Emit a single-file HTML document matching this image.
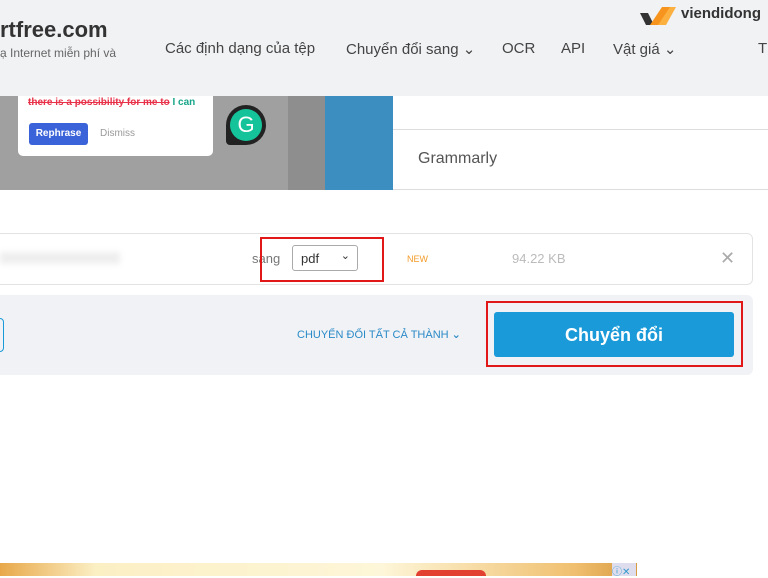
<!DOCTYPE html>
<html><head><meta charset="utf-8"><style>
*{margin:0;padding:0;box-sizing:border-box}
body{width:768px;height:576px;overflow:hidden;background:#fff;font-family:"Liberation Sans","DejaVu Sans",sans-serif;position:relative}
.a{position:absolute}
</style></head><body>
<div class="a" style="left:0;top:0;width:768px;height:96px;background:#f1f2f4"></div>
<div class="a" style="left:0;top:17px;font-size:22px;font-weight:bold;color:#333">rtfree.com</div>
<div class="a" style="left:0;top:46px;font-size:12px;color:#666">ạ Internet miễn phí và</div>
<div class="a" style="left:165px;top:40px;font-size:15px;color:#444">Các định dạng của tệp</div>
<div class="a" style="left:346px;top:40px;font-size:15px;color:#444">Chuyển đổi sang ⌄</div>
<div class="a" style="left:502px;top:40px;font-size:15px;color:#444">OCR</div>
<div class="a" style="left:561px;top:40px;font-size:15px;color:#444">API</div>
<div class="a" style="left:613px;top:40px;font-size:15px;color:#444">Vật giá ⌄</div>
<div class="a" style="left:758px;top:40px;font-size:15px;color:#444">T</div>
<svg class="a" style="left:640px;top:5px" width="40" height="22"><polygon points="0,8 8,8 14,20 6,20" fill="#333"/><polygon points="10,20 22,2 34,2 22,20" fill="#f7941d"/><polygon points="18,20 30,2 36,2 26,20" fill="#fbb040"/></svg>
<div class="a" style="left:681px;top:5px;font-size:15px;font-weight:bold;color:#333">viendidong</div>
<div class="a" style="left:0;top:96px;width:288px;height:94px;background:#a0a0a0"></div>
<div class="a" style="left:288px;top:96px;width:37px;height:94px;background:#8e8e8e"></div>
<div class="a" style="left:325px;top:96px;width:68px;height:94px;background:#3c8dc0"></div>
<div class="a" style="left:393px;top:129px;width:375px;height:1px;background:#ddd"></div>
<div class="a" style="left:393px;top:189px;width:375px;height:1px;background:#ddd"></div>
<div class="a" style="left:418px;top:150px;font-size:16px;color:#555">Grammarly</div>
<div class="a" style="left:18px;top:96px;width:195px;height:60px;background:#fff;border-radius:0 0 5px 5px"></div>
<div class="a" style="left:28px;top:97px;font-size:10px;font-weight:bold;color:#e8324a;white-space:nowrap"><span style="text-decoration:line-through">there is a possibility for me to</span> <span style="color:#17a589">I can</span></div>
<div class="a" style="left:29px;top:123px;width:59px;height:22px;background:#3b63d9;border-radius:3px;color:#fff;font-size:10px;font-weight:bold;text-align:center;line-height:22px">Rephrase</div>
<div class="a" style="left:100px;top:128px;font-size:10px;color:#999">Dismiss</div>
<div class="a" style="left:226px;top:105px;width:40px;height:40px;border-radius:50% 50% 50% 4px;background:#222"></div>
<div class="a" style="left:230px;top:109px;width:32px;height:32px;border-radius:50%;background:#15c39a;color:#fff;font-size:22px;text-align:center;line-height:32px">G</div>
<div class="a" style="left:-6px;top:233px;width:759px;height:52px;border:1px solid #e3e3e3;border-radius:6px"></div>
<div class="a" style="left:0;top:252px;width:120px;height:12px;background:#eee;filter:blur(3px)"></div>
<div class="a" style="left:252px;top:251px;font-size:13px;color:#777">sang</div>
<div class="a" style="left:292px;top:245px;width:66px;height:26px;border:1px solid #aaa;border-radius:3px;font-size:13px;color:#333;padding:5px 8px">pdf<span style="position:absolute;right:7px;top:3px;font-size:11px">⌄</span></div>
<div class="a" style="left:260px;top:237px;width:124px;height:45px;border:2px solid #e21818"></div>
<div class="a" style="left:407px;top:254px;font-size:9px;color:#f39c2a">NEW</div>
<div class="a" style="left:512px;top:251px;font-size:13px;color:#bbb">94.22 KB</div>
<div class="a" style="left:720px;top:248px;font-size:18px;color:#aaa">✕</div>
<div class="a" style="left:-6px;top:295px;width:759px;height:80px;background:#f0f2f5;border-radius:6px"></div>
<div class="a" style="left:-8px;top:318px;width:12px;height:34px;border:1px solid #1a9ad8;border-radius:4px"></div>
<div class="a" style="left:297px;top:328px;font-size:11px;color:#2a8ac8">CHUYỂN ĐỔI TẤT CẢ THÀNH <span style="font-weight:bold">⌄</span></div>
<div class="a" style="left:494px;top:312px;width:240px;height:45px;background:#1a9ad8;border-radius:3px;color:#fff;font-size:18px;font-weight:bold;text-align:center;line-height:47px">Chuyển đổi</div>
<div class="a" style="left:486px;top:301px;width:257px;height:66px;border:2px solid #e21818"></div>
<div class="a" style="left:0;top:563px;width:637px;height:13px;background:linear-gradient(90deg,#e8a84a,#fbefc4 15%,#fdf6d8 60%,#f0c070 90%,#d89a40)"></div>
<div class="a" style="left:416px;top:570px;width:70px;height:6px;background:#e24030;border-radius:6px 6px 0 0"></div>
<div class="a" style="left:612px;top:563px;width:24px;height:13px;background:#dde;color:#39c;font-size:10px">ⓘ✕</div>
</body></html>
